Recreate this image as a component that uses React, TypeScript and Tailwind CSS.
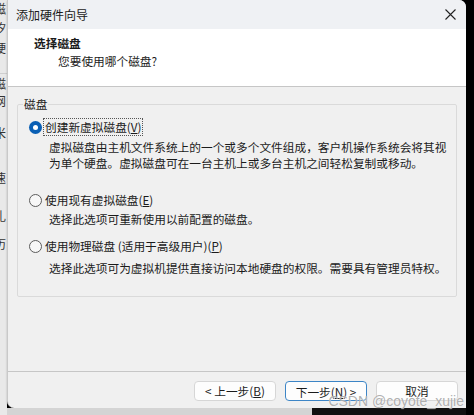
import { useState } from "react";

const FONT = "font-['Microsoft_YaHei_UI','Noto_Sans_CJK_SC',sans-serif]";

const SIDE_CHARS = [
  { ch: "磁", mt: "mt-[1px]" },
  { ch: "汐", mt: "mt-[3px]" },
  { ch: "硬", mt: "mt-[4px]" },
  { ch: "磁", mt: "mt-[17px]" },
  { ch: "网", mt: "mt-[4px]" },
  { ch: "米", mt: "mt-[16px]" },
  { ch: "速", mt: "mt-[29px]" },
  { ch: "扎", mt: "mt-[22px]" },
  { ch: "历", mt: "mt-[12px]" },
];

type Option = {
  id: string;
  label: string;
  key: string;
  desc: string[];
};

const OPTIONS: Option[] = [
  {
    id: "new",
    label: "创建新虚拟磁盘(",
    key: "V",
    desc: [
      "虚拟磁盘由主机文件系统上的一个或多个文件组成，客户机操作系统会将其视",
      "为单个硬盘。虚拟磁盘可在一台主机上或多台主机之间轻松复制或移动。",
    ],
  },
  {
    id: "existing",
    label: "使用现有虚拟磁盘(",
    key: "E",
    desc: ["选择此选项可重新使用以前配置的磁盘。"],
  },
  {
    id: "physical",
    label: "使用物理磁盘 (适用于高级用户)(",
    key: "P",
    desc: ["选择此选项可为虚拟机提供直接访问本地硬盘的权限。需要具有管理员特权。"],
  },
];

const ROW_GAP: Record<string, string> = {
  new: "mt-[6px]",
  existing: "mt-[20px]",
  physical: "mt-[10px]",
};

const DESC_GAP: Record<string, string> = {
  new: "mt-[3px]",
  existing: "mt-[2px]",
  physical: "mt-[5px]",
};

function Radio({ checked }: { checked: boolean }) {
  return checked ? (
    <span className="grid h-[13px] w-[13px] shrink-0 place-items-center rounded-full bg-[#0a5fb4]">
      <span className="h-[5px] w-[5px] rounded-full bg-white" />
    </span>
  ) : (
    <span className="h-[13px] w-[13px] shrink-0 rounded-full border border-[#5c5c5c] bg-[#f7f7f7]" />
  );
}

export default function App() {
  const [choice, setChoice] = useState("new");

  return (
    <div className={`relative flex h-[415px] w-[474px] overflow-hidden bg-black text-[11.7px] text-[#1b1b1b] ${FONT}`}>
      {/* background window peeking out on the left */}
      <div className="flex h-full w-[7px] shrink-0 flex-col overflow-hidden bg-[#e9e9e9]">
        {SIDE_CHARS.map((c, i) => (
          <span
            key={i}
            className={`-ml-[6px] block h-[16px] text-[12px] leading-[16px] text-[#333] ${c.mt} ${i === 3 ? "border-t border-[#cfcfcf] pt-[2px]" : ""}`}
          >
            {c.ch}
          </span>
        ))}
      </div>

      <div className="flex w-[459px] shrink-0 flex-col">
        {/* dialog */}
        <div className="flex h-[408px] flex-col overflow-hidden rounded-tr-[7px] rounded-bl-[7px] border-l border-[#c9c9c9] bg-[#f0f0f0] shadow-[0_1px_2px_rgba(0,0,0,0.25)]">
          {/* title bar */}
          <div className="flex h-[29px] shrink-0 items-center justify-between bg-[#eff1f4] pl-[8px] pr-[10px]">
            <span className="text-[12px]">添加硬件向导</span>
            <svg width="11" height="11" viewBox="0 0 11 11" className="text-[#222]">
              <path d="M0.5 0.5 L10.5 10.5 M10.5 0.5 L0.5 10.5" stroke="currentColor" strokeWidth="1.1" />
            </svg>
          </div>

          {/* header */}
          <div className="flex h-[57px] shrink-0 flex-col bg-white pl-[26px] pt-[6px]">
            <span className="font-bold leading-[16px]">选择磁盘</span>
            <span className="ml-[24px] mt-[2px] leading-[16px]">您要使用哪个磁盘?</span>
          </div>

          {/* body */}
          <div className="flex flex-1 flex-col border-t border-[#c6c6c6] bg-[#f0f0f0] px-[9px] pt-[9px]">
            <fieldset className="h-[201px] rounded-[2px] border border-[#dadada]">
              <legend className="ml-[5px] px-[1px] leading-[16px]">磁盘</legend>
              <div className="flex flex-col pl-[11px]">
                {OPTIONS.map((o) => (
                  <div key={o.id} className={`flex flex-col ${ROW_GAP[o.id]}`}>
                    <button
                      type="button"
                      onClick={() => setChoice(o.id)}
                      className="flex h-[18px] items-center gap-[2px] text-left"
                    >
                      <Radio checked={choice === o.id} />
                      <span
                        className={`px-[1px] leading-[16px] ${
                          choice === o.id ? "outline-1 outline-dotted outline-[#555]" : ""
                        }`}
                      >
                        {o.label}
                        <u>{o.key}</u>)
                      </span>
                    </button>
                    <div className={`ml-[20px] flex flex-col ${DESC_GAP[o.id]}`}>
                      {o.desc.map((d) => (
                        <span key={d} className="leading-[16px]">
                          {d}
                        </span>
                      ))}
                    </div>
                  </div>
                ))}
              </div>
            </fieldset>
          </div>

          {/* footer */}
          <div className="flex h-[37px] shrink-0 items-start justify-end gap-[9px] border-t border-[#c6c6c6] pr-[8px] pt-[9px]">
            <button
              type="button"
              className="h-[20px] w-[82px] rounded-[4px] border border-[#d6d6d6] bg-[#fdfdfd] leading-[18px]"
            >
              &lt; 上一步(<u>B</u>)
            </button>
            <button
              type="button"
              className="h-[20px] w-[82px] rounded-[4px] border-[1.5px] border-[#3d85c6] bg-[#fdfdfd] leading-[17px]"
            >
              下一步(<u>N</u>) &gt;
            </button>
            <button
              type="button"
              className="h-[20px] w-[82px] rounded-[4px] border border-[#d6d6d6] bg-[#fdfdfd] leading-[18px]"
            >
              取消
            </button>
          </div>
        </div>

        {/* what is under the dialog */}
        <div className="flex flex-1">
          <div className="w-[305px] bg-[#d4d4d4]" />
          <div className="flex-1 bg-[#111]" />
        </div>
      </div>

      {/* watermark */}
      <span className="pointer-events-none absolute bottom-[6px] right-[10px] font-['Liberation_Sans',sans-serif] text-[14px] leading-[16px] text-[#9a9a9a]/80 [text-shadow:0_0_1px_rgba(255,255,255,0.9)]">
        CSDN @coyote_xujie
      </span>
    </div>
  );
}
